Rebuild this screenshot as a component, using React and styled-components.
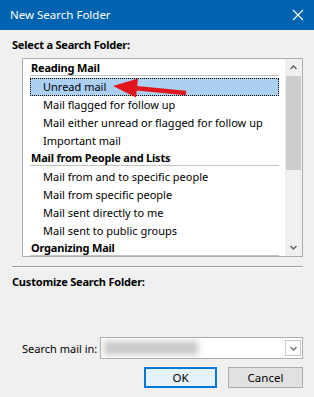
import React from 'react';
import styled, { createGlobalStyle } from 'styled-components';

const GlobalStyle = createGlobalStyle`
	body {
		margin: 0;
		background: #f0f0f0;
		font-family: "Segoe UI", "Noto Sans", "Open Sans", sans-serif;
		font-size: 11px;
		color: #000;
	}
`;

const Dialog = styled.div`
	position: relative;
	width: 314px;
	height: 397px;
	background: #f0f0f0;
	display: flex;
	flex-direction: column;
	overflow: hidden;
`;

const TitleBar = styled.div`
	height: 30px;
	background: #0063b1;
	color: #fff;
	display: flex;
	align-items: center;
	justify-content: space-between;
	padding: 0 10px;
	flex-shrink: 0;
`;

const Title = styled.span`
	font-size: 11.5px;
	line-height: 16px;
`;

const Body = styled.div`
	display: flex;
	flex-direction: column;
	padding: 0 11px 0 12px;
	flex: 1;
`;

const SectionLabel = styled.div`
	font-weight: bold;
	line-height: 16px;
	letter-spacing: -0.2px;
	margin-top: ${p => p.top}px;
`;

const ListBox = styled.div`
	margin: 5px 0 0 10px;
	height: 197px;
	border: 1px solid #adadad;
	background: #fff;
	display: flex;
	overflow: hidden;
`;

const List = styled.div`
	flex: 1;
	padding: 1px 6px 0 7px;
`;

const Header = styled.div`
	font-weight: bold;
	letter-spacing: -0.2px;
	line-height: 15px;
	padding-left: 1px;
	border-bottom: 1px solid #c4c4c4;
	margin-bottom: 2px;
	white-space: nowrap;
`;

const Item = styled.div`
	height: 18px;
	line-height: 16px;
	padding-left: 12px;
	box-sizing: border-box;
	border: 1px ${p => (p.selected ? 'dotted #000' : 'solid transparent')};
	background: ${p => (p.selected ? '#acd0f2' : 'transparent')};
	white-space: nowrap;
`;

const ScrollBar = styled.div`
	width: 17px;
	background: #f0f0f0;
	display: flex;
	flex-direction: column;
	align-items: center;
`;

const ScrollButton = styled.div`
	height: 17px;
	width: 17px;
	display: flex;
	align-items: center;
	justify-content: center;
`;

const Thumb = styled.div`
	width: 15px;
	height: 94px;
	background: #cdcdcd;
`;

const Track = styled.div`
	flex: 1;
`;

const Separator = styled.div`
	margin-top: 9px;
	height: 1px;
	background: #a0a0a0;
	border-bottom: 1px solid #fff;
`;

const Spacer = styled.div`
	flex: 1;
`;

const FieldRow = styled.div`
	display: flex;
	align-items: center;
	padding-left: 10px;
	height: 22px;
`;

const FieldLabel = styled.span`
	margin-right: 3px;
	white-space: nowrap;
`;

const Combo = styled.div`
	flex: 1;
	height: 22px;
	box-sizing: border-box;
	border: 1px solid #adadad;
	background: #fff;
	display: flex;
	align-items: center;
	padding: 0 1px 0 3px;
`;

const Blurred = styled.div`
	width: 94px;
	height: 14px;
	background: #c9c9c9;
	filter: blur(3px);
`;

const DropButton = styled.div`
	margin-left: auto;
	width: 16px;
	height: 16px;
	box-sizing: border-box;
	border: 1px solid #c8c8c8;
	display: flex;
	align-items: center;
	justify-content: center;
`;

const Buttons = styled.div`
	display: flex;
	justify-content: flex-end;
	gap: 11px;
	margin: 8px 0 9px;
`;

const Button = styled.button`
	width: ${p => p.w}px;
	height: 21px;
	box-sizing: border-box;
	font-family: inherit;
	font-size: 11.5px;
	padding: 0;
	background: ${p => (p.primary ? '#e5f1fb' : '#e1e1e1')};
	border: ${p => (p.primary ? '2px solid #0078d7' : '1px solid #adadad')};
	color: #000;
`;

const Arrow = styled.svg`
	position: absolute;
	left: 110px;
	top: 74px;
`;

const Chevron = ({ up, color = '#606060', size = 7 }) => (
	<svg width={size} height={size - 2} viewBox="0 0 7 5">
		<polyline
			points={up ? '0.5,4 3.5,1 6.5,4' : '0.5,1 3.5,4 6.5,1'}
			fill="none"
			stroke={color}
			strokeWidth="1.4"
		/>
	</svg>
);

const sections = [
	{
		title: 'Reading Mail',
		items: [
			'Unread mail',
			'Mail flagged for follow up',
			'Mail either unread or flagged for follow up',
			'Important mail',
		],
	},
	{
		title: 'Mail from People and Lists',
		items: [
			'Mail from and to specific people',
			'Mail from specific people',
			'Mail sent directly to me',
			'Mail sent to public groups',
		],
	},
	{ title: 'Organizing Mail', items: [] },
];

const App = () => (
	<>
		<GlobalStyle />
		<Dialog>
			<TitleBar>
				<Title>New Search Folder</Title>
				<svg width="12" height="12" viewBox="0 0 12 12">
					<path d="M1 1 L11 11 M11 1 L1 11" stroke="#fff" strokeWidth="1.1" />
				</svg>
			</TitleBar>
			<Body>
				<SectionLabel top={7}>Select a Search Folder:</SectionLabel>
				<ListBox>
					<List>
						{sections.map(section => (
							<React.Fragment key={section.title}>
								<Header>{section.title}</Header>
								{section.items.map(item => (
									<Item key={item} selected={item === 'Unread mail'}>{item}</Item>
								))}
							</React.Fragment>
						))}
					</List>
					<ScrollBar>
						<ScrollButton><Chevron up /></ScrollButton>
						<Thumb />
						<Track />
						<ScrollButton><Chevron /></ScrollButton>
					</ScrollBar>
				</ListBox>
				<Separator />
				<SectionLabel top={6}>Customize Search Folder:</SectionLabel>
				<Spacer />
				<FieldRow>
					<FieldLabel>Search mail in:</FieldLabel>
					<Combo>
						<Blurred />
						<DropButton><Chevron color="#707070" /></DropButton>
					</Combo>
				</FieldRow>
				<Buttons>
					<Button primary w={73}>OK</Button>
					<Button w={75}>Cancel</Button>
				</Buttons>
			</Body>
			<Arrow width="80" height="28" viewBox="0 0 80 28">
				<line x1="24" y1="14" x2="76" y2="19" stroke="#e3151c" strokeWidth="4.5" />
				<polygon points="3,12 28,4.5 26,23.5" fill="#e3151c" />
			</Arrow>
		</Dialog>
	</>
);

export default App;
